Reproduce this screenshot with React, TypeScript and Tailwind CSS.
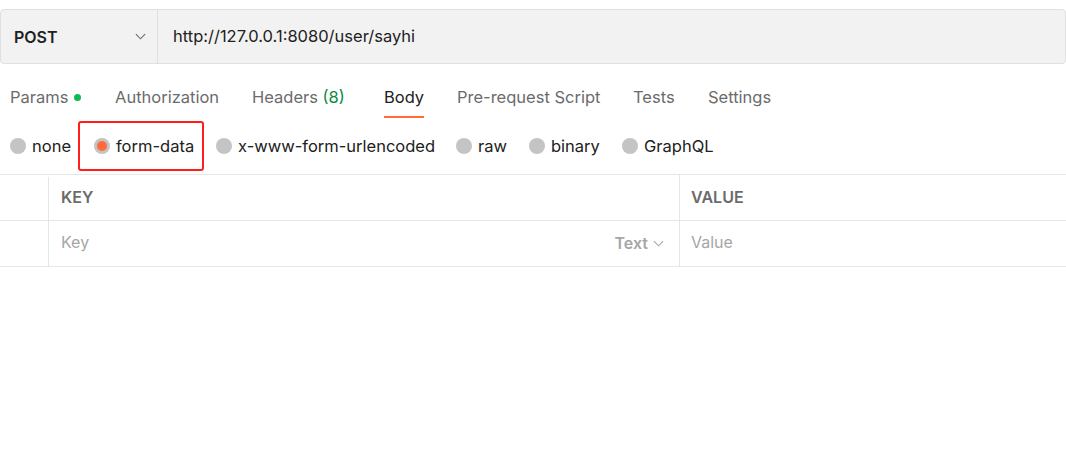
import React from "react"

const tabs = [
  { label: "Params", w: "w-[105px]", dot: true },
  { label: "Authorization", w: "w-[137px]" },
  { label: "Headers", w: "w-[132px]", count: "(8)" },
  { label: "Body", w: "w-[73px]", active: true },
  { label: "Pre-request Script", w: "w-[176px]" },
  { label: "Tests", w: "w-[75px]" },
  { label: "Settings", w: "w-[100px]" },
]

const bodyTypes = [
  { label: "none", w: "w-[68px]" },
  { label: "form-data", w: "w-[126px] mr-[12px]", selected: true },
  { label: "x-www-form-urlencoded", w: "w-[240px]" },
  { label: "raw", w: "w-[73px]" },
  { label: "binary", w: "w-[93px]" },
  { label: "GraphQL", w: "w-[110px]" },
]

function Chevron({ className }: { className?: string }) {
  return (
    <svg viewBox="0 0 12 7" className={className} fill="none" stroke="currentColor" strokeWidth="1.2">
      <polyline points="1,1 6,6 11,1" />
    </svg>
  )
}

export default function App() {
  return (
    <div className="w-[1066px] h-[463px] bg-white font-['Inter',sans-serif] text-[#212121] overflow-hidden">
      {/* request bar */}
      <div className="mt-[9px] h-[55px] flex bg-[#f2f2f2] border border-[#e0e0e0] rounded-[4px]">
        <div className="w-[157px] flex items-center justify-between pl-[13px] pr-[11px] border-r border-[#e0e0e0]">
          <span className="text-[16px] font-semibold">POST</span>
          <Chevron className="w-[11px] h-[7px] text-[#6b6b6b]" />
        </div>
        <div className="flex items-center pl-[15px] text-[16.5px]">http://127.0.0.1:8080/user/sayhi</div>
      </div>

      {/* tabs */}
      <div className="flex pl-[10px]">
        {tabs.map((t) => (
          <div key={t.label} className={`${t.w} h-[54px] pt-[14px] flex`}>
            <span
              className={`flex items-center gap-[6px] text-[16.5px] border-b-2 ${
                t.active ? "border-[#ff6c37] text-[#212121]" : "border-transparent text-[#6b6b6b]"
              }`}
            >
              <span>
                {t.label}
                {t.count && <span className="text-[#0a8a3e]"> {t.count}</span>}
              </span>
              {t.dot && <span className="w-[7px] h-[7px] rounded-full bg-[#0cbb52]" />}
            </span>
          </div>
        ))}
      </div>

      {/* body types */}
      <div className="h-[56px] flex items-center pl-[10px]">
        {bodyTypes.map((b) => (
          <div
            key={b.label}
            className={`${b.w} flex items-center gap-[6px] text-[16.5px] ${
              b.selected ? "h-[50px] border-2 border-[#ff1d1d] rounded-[3px] pl-[14px]" : ""
            }`}
          >
            {b.selected ? (
              <span className="w-[16px] h-[16px] rounded-full bg-[#c4c4c4] flex items-center justify-center">
                <span className="w-[10px] h-[10px] rounded-full bg-[#ff6c37]" />
              </span>
            ) : (
              <span className="w-[16px] h-[16px] rounded-full bg-[#c4c4c4]" />
            )}
            <span>{b.label}</span>
          </div>
        ))}
      </div>

      {/* table */}
      <div className="border-t border-[#e6e6e6]">
        <div className="flex h-[46px] border-b border-[#e6e6e6]">
          <div className="w-[49px] border-r border-[#e6e6e6] mt-[2px]" />
          <div className="w-[631px] border-r border-[#e6e6e6] flex items-center pl-[12px] pb-[1px] text-[16px] font-semibold text-[#6b6b6b]">
            KEY
          </div>
          <div className="flex-1 flex items-center pl-[11px] pb-[1px] text-[16px] font-semibold text-[#6b6b6b]">VALUE</div>
        </div>
        <div className="flex h-[46px] border-b border-[#e6e6e6]">
          <div className="w-[49px] border-r border-[#e6e6e6]" />
          <div className="w-[631px] border-r border-[#e6e6e6] flex items-center justify-between pl-[12px] pr-[15px] pb-[4px] text-[16px] text-[#a6a6a6]">
            <span>Key</span>
            <span className="flex items-center gap-[5px] font-semibold pt-[3px]">
              Text
              <Chevron className="w-[11px] h-[7px]" />
            </span>
          </div>
          <div className="flex-1 flex items-center pl-[11px] pb-[4px] text-[16px] text-[#a6a6a6]">Value</div>
        </div>
      </div>
    </div>
  )
}
